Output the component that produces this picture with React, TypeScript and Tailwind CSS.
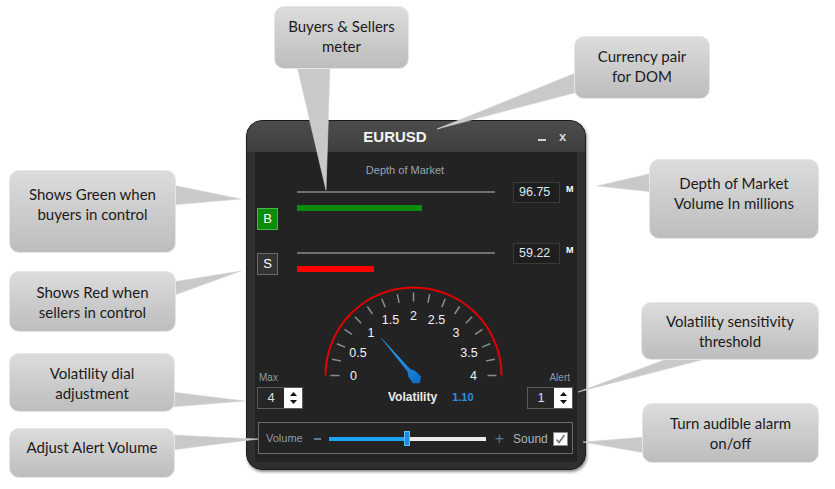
import React from "react";

type Callout = {
  text: string[];
  left: number;
  top: number;
  w: number;
  h: number;
  pb?: number;
};

const CALLOUTS: Callout[] = [
  { text: ["Buyers & Sellers", "meter"], left: 274, top: 6, w: 135, h: 63, pb: 4 },
  { text: ["Currency pair", "for DOM"], left: 574, top: 36, w: 136, h: 63, pb: 3 },
  { text: ["Shows Green when", "buyers in control"], left: 9, top: 170, w: 167, h: 83, pb: 16 },
  { text: ["Shows Red when", "sellers in control"], left: 9, top: 271, w: 167, h: 61 },
  { text: ["Volatility dial", "adjustment"], left: 9, top: 353, w: 166, h: 59 },
  { text: ["Adjust Alert Volume"], left: 9, top: 428, w: 166, h: 50, pb: 12 },
  { text: ["Depth of Market", "Volume In millions"], left: 649, top: 159, w: 170, h: 80, pb: 13 },
  { text: ["Volatility sensitivity", "threshold"], left: 641, top: 302, w: 178, h: 58 },
  { text: ["Turn audible alarm", "on/off"], left: 642, top: 403, w: 177, h: 60 },
];

// tails of the callouts, page coordinates
const TAILS = [
  "297,66 330,66 326,190",
  "578,72 578,92 437,129",
  "172,185 172,205 241,199",
  "172,282 172,296 241,271",
  "172,392 172,407 245,401",
  "172,435 172,450 258,439",
  "653,173 653,192 597,186",
  "672,357 713,357 578,392",
  "645,437 645,453 583,442",
];

const CX = 110.5;
const CY = 95.5;
const LABELS = ["0", "0.5", "1", "1.5", "2", "2.5", "3", "3.5", "4"];

function Gauge({ value }: { value: number }) {
  const rad = (deg: number) => (deg * Math.PI) / 180;
  const ticks = Array.from({ length: 17 }, (_, i) => {
    const a = rad(180 - i * 11.25);
    return {
      x1: CX + 74 * Math.cos(a),
      y1: CY - 74 * Math.sin(a),
      x2: CX + 83 * Math.cos(a),
      y2: CY - 83 * Math.sin(a),
    };
  });

  // needle
  const bx = 112;
  const by = 97.5;
  const na = rad(180 - (value / 4) * 180);
  const dx = Math.cos(na);
  const dy = -Math.sin(na);
  const nx = -dy;
  const ny = dx;
  const pt = (t: number, w: number) =>
    `${(bx + dx * t + nx * w).toFixed(1)},${(by + dy * t + ny * w).toFixed(1)}`;
  const needle = [
    pt(52, 0),
    pt(9, 1.6),
    pt(5, 4.2),
    pt(-3, 5),
    pt(-7, 0),
    pt(-3, -5),
    pt(5, -4.2),
    pt(9, -1.6),
  ].join(" ");

  return (
    <svg width="224" height="110" viewBox="0 0 224 110" className="block">
      <defs>
        <linearGradient id="needleFill" x1="0" y1="0" x2="1" y2="1">
          <stop offset="0" stopColor="#3db4ff" />
          <stop offset="1" stopColor="#0b6cc4" />
        </linearGradient>
      </defs>
      <path
        d={`M ${CX - 88} ${CY} A 88 88 0 0 1 ${CX + 88} ${CY}`}
        fill="none"
        stroke="#e10000"
        strokeWidth="2"
      />
      {ticks.map((t, i) => (
        <line key={i} {...t} stroke="#8c8c8c" strokeWidth="1.5" />
      ))}
      {LABELS.map((l, i) => {
        const a = rad(180 - i * 22.5);
        return (
          <text
            key={l}
            x={CX + 60 * Math.cos(a)}
            y={CY - 60 * Math.sin(a)}
            fill="#f2f2f2"
            fontSize="12.5"
            fontFamily="'Liberation Sans', Arial, sans-serif"
            textAnchor="middle"
            dominantBaseline="central"
          >
            {l}
          </text>
        );
      })}
      <polygon points={needle} fill="url(#needleFill)" stroke="#1b84d8" strokeWidth="0.5" />
    </svg>
  );
}

function Spin({ value }: { value: string }) {
  return (
    <div className="flex h-[22px] w-[46px] border border-[#5c5c5c]">
      <div className="flex flex-1 items-center justify-center bg-[#262626] text-[13px] text-[#d6dde4]">
        {value}
      </div>
      <div className="flex w-[18px] flex-col items-center justify-center gap-[4px] bg-white">
        <svg width="7" height="4" viewBox="0 0 7 4">
          <polygon points="0,4 3.5,0 7,4" fill="#111" />
        </svg>
        <svg width="7" height="4" viewBox="0 0 7 4">
          <polygon points="0,0 3.5,4 7,0" fill="#111" />
        </svg>
      </div>
    </div>
  );
}

function Meter({
  side,
  bar,
  barColor,
  value,
  buttonTop,
  height,
}: {
  side: "B" | "S";
  bar: number;
  barColor: string;
  value: string;
  buttonTop: number;
  height: number;
}) {
  const btn =
    side === "B"
      ? "bg-[#0b8c0b] border-[#4caf4c]"
      : "bg-[#333333] border-[#6a6a6a]";
  return (
    <div className="flex shrink-0" style={{ height }}>
      <div className="ml-[2px] w-[21px]">
        <div
          className={`flex h-[22px] w-[21px] items-center justify-center border text-[13px] text-white ${btn}`}
          style={{ marginTop: buttonTop }}
        >
          {side}
        </div>
      </div>
      <div className="ml-[19px] w-[198px]">
        <div className="mt-[9px] h-[2px] w-full bg-[#707070]" />
        <div className={`mt-[12px] h-[6px] ${barColor}`} style={{ width: bar }} />
      </div>
      <div className="ml-[18px] flex h-[21px] w-[47px] items-center border border-[#3a3a3a] bg-[#1e1e1e] pl-[5px] text-[12.5px] text-[#dfe6ec]">
        {value}
      </div>
      <div className="ml-[6px] mt-[1px] text-[9px] font-bold text-white">M</div>
    </div>
  );
}

function Widget() {
  return (
    <div className="absolute left-[246px] top-[120px] flex h-[350px] w-[340px] flex-col rounded-[16px] border border-[#1c1c1c] bg-[#2f2f2f] px-[8px] pb-[7px] shadow-[1px_2px_3px_rgba(0,0,0,0.45)] font-['Liberation_Sans',Arial,sans-serif]">
      <div className="-mx-[8px] flex h-[31px] shrink-0 items-center rounded-t-[15px] bg-gradient-to-b from-[#4c4c4c] to-[#3f3f3f] px-[8px]">
        <div className="w-[280px] pt-[2px] text-center text-[15px] font-bold text-[#f4f4f4]">EURUSD</div>
        <div className="ml-[3px] mt-[6px] h-[2px] w-[8px] bg-[#d4d4d4]" />
        <div className="ml-[13px] text-[13px] font-bold text-[#d4d4d4]">x</div>
      </div>
      <div className="flex flex-1 flex-col bg-[#232323]">
        <div className="h-[30px] shrink-0 pr-[22px] pt-[12px] text-center text-[11px] leading-[12px] text-[#9aa4ae]">
          Depth of Market
        </div>
        <Meter side="B" bar={125} barColor="bg-[#0c8a0c]" value="96.75" buttonTop={26} height={48} />
        <div className="h-[13px] shrink-0" />
        <Meter side="S" bar={77} barColor="bg-[#ff0000]" value="59.22" buttonTop={10} height={32} />
        <div className="flex h-[134px] shrink-0 items-end pt-[5px]">
          <div className="ml-[2px] flex w-[46px] flex-col">
            <div className="pl-[2px] text-[10px] text-[#8e9aa6]">Max</div>
            <div className="mt-[2px]">
              <Spin value="4" />
            </div>
          </div>
          <div className="flex w-[224px] flex-col self-start">
            <Gauge value={1.1} />
            <div className="flex h-[19px] items-start leading-[14px]">
              <span className="ml-[85px] text-[12px] font-bold text-[#ececec]">Volatility</span>
              <span className="ml-[15px] text-[11px] font-bold text-[#2f8fe0]">1.10</span>
            </div>
          </div>
          <div className="flex w-[46px] flex-col">
            <div className="pr-[3px] text-right text-[10px] text-[#8e9aa6]">Alert</div>
            <div className="mt-[2px]">
              <Spin value="1" />
            </div>
          </div>
        </div>
        <div className="ml-[3px] mr-[4px] mt-[13px] flex h-[32px] shrink-0 items-center border border-[#6c6c6c] pl-[7px] pt-[1px]">
          <span className="text-[11px] text-[#8c9cac]">Volume</span>
          <span className="ml-[11px] h-[2px] w-[7px] bg-[#5f7890]" />
          <div className="ml-[8px] flex h-[15px] w-[157px] items-center">
            <div className="h-[4px] w-[75px] bg-[#1ea2f2]" />
            <div className="h-[15px] w-[6px] border border-[#5cc0ff] bg-[#1a8de0]" />
            <div className="h-[4px] flex-1 bg-[#ededed]" />
          </div>
          <span className="ml-[9px] text-[16px] leading-[16px] text-[#5f7890]">+</span>
          <span className="ml-[9px] text-[12px] text-[#a8b4c0]">Sound</span>
          <div className="ml-[5px] flex h-[14px] w-[15px] items-center justify-center border border-[#888] bg-white">
            <svg width="11" height="10" viewBox="0 0 11 10">
              <path d="M1.5 5.5 L4 8.5 L9.5 1" fill="none" stroke="#7a7a7a" strokeWidth="1.8" />
            </svg>
          </div>
        </div>
        <div className="flex-1" />
      </div>
    </div>
  );
}

export default function App() {
  return (
    <div className="relative h-[489px] w-[835px] overflow-hidden bg-white">
      <Widget />
      <svg className="pointer-events-none absolute left-0 top-0" width="835" height="489">
        {TAILS.map((p, i) => (
          <polygon key={i} points={p} fill="#c9c9c9" stroke="#d6d6d6" strokeWidth="0.6" />
        ))}
      </svg>
      {CALLOUTS.map((c) => (
        <div
          key={c.text.join(" ")}
          className="absolute flex flex-col items-center justify-center rounded-[10px] border border-[#e6e6e6] bg-gradient-to-b from-[#dcdcdc] to-[#bdbdbd] text-center font-['Lato','Liberation_Sans',sans-serif] text-[15px] leading-[20px] text-[#1b1b1b]"
          style={{ left: c.left, top: c.top, width: c.w, height: c.h, paddingBottom: c.pb ?? 0 }}
        >
          {c.text.map((t) => (
            <div key={t}>{t}</div>
          ))}
        </div>
      ))}
    </div>
  );
}
